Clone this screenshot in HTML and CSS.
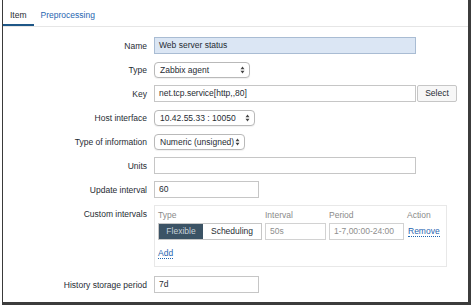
FILE: index.html
```html
<!DOCTYPE html>
<html>
<head>
<meta charset="utf-8">
<link rel="stylesheet" href="styles.css">
</head>
<body>
<div class="frame">
  <div class="tabs">
    <div class="tab active">Item</div>
    <div class="tab link">Preprocessing</div>
  </div>
  <div class="form">
    <div class="row">
      <label class="lbl">Name</label>
      <div class="field"><div class="input wide focus">Web server status</div></div>
    </div>
    <div class="row">
      <label class="lbl">Type</label>
      <div class="field"><div class="select w-type">Zabbix agent<svg class="arr" width="5" height="8" viewBox="0 0 5 8"><path d="M0.5 3.2L2.5 0.6L4.5 3.2Z M0.5 4.8L2.5 7.4L4.5 4.8Z" fill="#444"/></svg></div></div>
    </div>
    <div class="row">
      <label class="lbl">Key</label>
      <div class="field"><div class="input wide">net.tcp.service[http,,80]</div><div class="btn">Select</div></div>
    </div>
    <div class="row">
      <label class="lbl">Host interface</label>
      <div class="field"><div class="select w-host">10.42.55.33 : 10050<svg class="arr" width="5" height="8" viewBox="0 0 5 8"><path d="M0.5 3.2L2.5 0.6L4.5 3.2Z M0.5 4.8L2.5 7.4L4.5 4.8Z" fill="#444"/></svg></div></div>
    </div>
    <div class="row">
      <label class="lbl">Type of information</label>
      <div class="field"><div class="select w-info">Numeric (unsigned)<svg class="arr" width="5" height="8" viewBox="0 0 5 8"><path d="M0.5 3.2L2.5 0.6L4.5 3.2Z M0.5 4.8L2.5 7.4L4.5 4.8Z" fill="#444"/></svg></div></div>
    </div>
    <div class="row">
      <label class="lbl">Units</label>
      <div class="field"><div class="input wide"></div></div>
    </div>
    <div class="row">
      <label class="lbl">Update interval</label>
      <div class="field"><div class="input short">60</div></div>
    </div>
    <div class="row top">
      <label class="lbl lbl-top">Custom intervals</label>
      <div class="field">
        <div class="box">
          <div class="ci-grid">
            <div class="hd">Type</div>
            <div class="hd">Interval</div>
            <div class="hd">Period</div>
            <div class="hd">Action</div>
            <div class="seg"><span class="seg-on">Flexible</span><span class="seg-off">Scheduling</span></div>
            <div class="input dis w-int">50s</div>
            <div class="input dis w-per">1-7,00:00-24:00</div>
            <div class="act"><span class="dlink">Remove</span></div>
          </div>
          <div class="add"><span class="dlink">Add</span></div>
        </div>
      </div>
    </div>
    <div class="row hist">
      <label class="lbl">History storage period</label>
      <div class="field"><div class="input short">7d</div></div>
    </div>
  </div>
</div>
</body>
</html>
```
FILE: styles.css
```css
html, body {
  margin: 0;
  padding: 0;
  background: #ffffff;
}
body {
  font-family: "Liberation Sans", Arial, sans-serif;
  font-size: 8.5px;
  color: #1f2c33;
}
.frame {
  margin-left: 2px;
  width: 469px;
  height: 305px;
  box-sizing: border-box;
  border-left: 1px solid #3a3a3a;
  border-right: 3px solid #3c3c3c;
  border-bottom: 3px solid #3c3c3c;
  background: #fff;
}
.tabs {
  display: flex;
  border-bottom: 1px solid #e6e6e6;
  height: 26px;
}
.tab {
  height: 26px;
  box-sizing: border-box;
  padding: 9px 7px 0;
  line-height: 12px;
}
.tab.active {
  box-shadow: inset 0 -2px 0 #1e5787;
  color: #1f2c33;
}
.tab.link {
  color: #1f65b0;
}
.form {
  padding-top: 10px;
  display: flex;
  flex-direction: column;
  gap: 7px;
}
.row {
  display: grid;
  grid-template-columns: 144px auto;
  column-gap: 7px;
  align-items: center;
  min-height: 17px;
}
.row.top {
  align-items: start;
}
.row.hist {
  margin-top: 2px;
}
.lbl {
  text-align: right;
  line-height: 12px;
}
.lbl-top {
  padding-top: 3px;
}
.field {
  display: flex;
  align-items: center;
}
.input {
  height: 17px;
  box-sizing: border-box;
  border: 1px solid #c6c6c6;
  background: #fff;
  padding: 0 4px;
  line-height: 15px;
  white-space: nowrap;
  overflow: hidden;
}
.input.wide { width: 262px; }
.input.short { width: 105px; }
.input.focus {
  background: #dbe6f4;
  border-color: #a9bcd3;
}
.input.dis {
  color: #8e8e8e;
  border-color: #d2d2d2;
}
.btn {
  margin-left: 1px;
  width: 40px;
  height: 17px;
  box-sizing: border-box;
  border: 1px solid #c6c6c6;
  border-radius: 2px;
  background: #f7f7f7;
  text-align: center;
  line-height: 15px;
}
.select {
  position: relative;
  height: 16px;
  box-sizing: border-box;
  border: 1px solid #b9b9b9;
  border-radius: 4px;
  background: #fff;
  padding: 0 5px;
  line-height: 14px;
  box-shadow: 0 1px 1px rgba(0,0,0,0.06);
  white-space: nowrap;
}
.arr {
  position: absolute;
  right: 4px;
  top: 3px;
}
.w-type { width: 96px; }
.w-host { width: 101px; }
.w-info { width: 91px; }
.box {
  width: 293px;
  height: 62px;
  box-sizing: border-box;
  border: 1px solid #e8e8e8;
  padding: 3px 0 0 3px;
}
.ci-grid {
  display: grid;
  grid-template-columns: 104px 61px 75px auto;
  column-gap: 3px;
  row-gap: 2px;
  align-items: center;
}
.ci-grid .input { padding: 0 4px; }
.hd {
  color: #8a8a8a;
  line-height: 12px;
}
.seg {
  display: flex;
  height: 17px;
  box-sizing: border-box;
  border: 1px solid #c6c6c6;
}
.seg-on {
  width: 44px;
  background: #3b5365;
  color: #c8d2da;
  text-align: center;
  line-height: 15px;
}
.seg-off {
  flex: 1;
  background: #fff;
  color: #1f2c33;
  text-align: center;
  line-height: 15px;
}
.w-int { width: 61px; }
.w-per { width: 75px; }
.act {
  padding-left: 1px;
}
.dlink {
  color: #1f65b0;
  border-bottom: 1px dotted #1f65b0;
  line-height: 11px;
}
.add {
  margin-top: 7px;
  line-height: 12px;
}
```
